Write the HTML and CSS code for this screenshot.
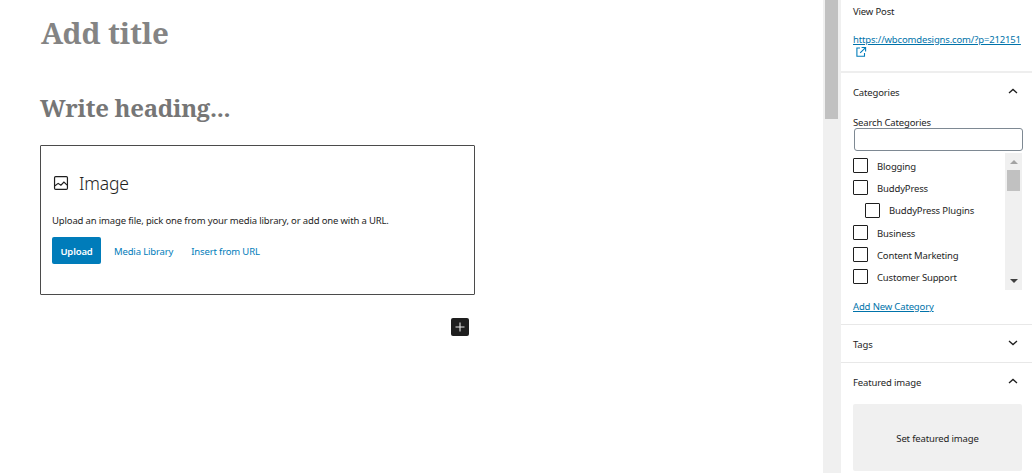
FILE: index.html
```html
<!DOCTYPE html>
<html lang="en">
<head>
  <meta charset="UTF-8">
  <title>Add New Post</title>
  <link rel="stylesheet" href="styles.css">
</head>
<body>
  <div class="editor">
    <main class="canvas">
      <h1 class="post-title">Add title</h1>
      <h2 class="heading-block">Write heading...</h2>

      <div class="placeholder">
        <div class="placeholder-label">
          <svg width="18" height="18" viewBox="0 0 24 24" fill="none" stroke="#1e1e1e" stroke-width="1.6">
            <rect x="3.4" y="3.4" width="17.2" height="17.2" rx="1.5"/>
            <path d="M4 15.6l4.2-3.1 3.7 2.5 4-4.2 4.3 4"/>
          </svg>
          <span>Image</span>
        </div>
        <p class="instructions">Upload an image file, pick one from your media library, or add one with a URL.</p>
        <div class="actions">
          <button class="upload">Upload</button>
          <button class="link library">Media Library</button>
          <button class="link">Insert from URL</button>
        </div>
      </div>

      <button class="inserter">
        <svg width="18" height="18" viewBox="0 0 18 18" stroke="#e4e4e4" stroke-width="1.1">
          <path d="M9 4.5v9M4.5 9h9"/>
        </svg>
      </button>
    </main>

    <div class="page-scroll"><div class="page-thumb"></div></div>

    <aside class="sidebar">
      <section class="permalink">
        <p class="view-post">View Post</p>
        <a href="#">https://wbcomdesigns.com/?p=212151</a>
        <svg width="12" height="12" viewBox="0 0 12 12" fill="none" stroke="#007cba" stroke-width="1.1">
          <path d="M5 2H1.9v8.2h7.6V7M6.6 1.5h4v4M10.3 1.8L5.2 6.9"/>
        </svg>
      </section>

      <section class="panel categories">
        <div class="panel-title">
          <span>Categories</span>
          <svg width="10" height="6" viewBox="0 0 10 6" fill="none" stroke="#1e1e1e" stroke-width="1.3"><path d="M1 5l4-3.6L9 5"/></svg>
        </div>
        <label class="search-label" for="search">Search Categories</label>
        <input class="search" id="search" type="text">
        <div class="category-box">
          <div class="category-list">
            <label><input type="checkbox"><span>Blogging</span></label>
            <label><input type="checkbox"><span>BuddyPress</span></label>
            <label class="child"><input type="checkbox"><span>BuddyPress Plugins</span></label>
            <label><input type="checkbox"><span>Business</span></label>
            <label><input type="checkbox"><span>Content Marketing</span></label>
            <label><input type="checkbox"><span>Customer Support</span></label>
          </div>
          <div class="list-scroll">
            <svg width="8" height="4" viewBox="0 0 8 4" fill="#a3a3a3"><path d="M0 4l4-4 4 4z"/></svg>
            <div class="list-thumb"></div>
            <svg class="down" width="8" height="4" viewBox="0 0 8 4" fill="#404040"><path d="M0 0l4 4 4-4z"/></svg>
          </div>
        </div>
        <a class="add-new" href="#">Add New Category</a>
      </section>

      <section class="panel tags">
        <div class="panel-title">
          <span>Tags</span>
          <svg width="10" height="6" viewBox="0 0 10 6" fill="none" stroke="#1e1e1e" stroke-width="1.3"><path d="M1 1l4 3.6L9 1"/></svg>
        </div>
      </section>

      <section class="panel featured">
        <div class="panel-title">
          <span>Featured image</span>
          <svg width="10" height="6" viewBox="0 0 10 6" fill="none" stroke="#1e1e1e" stroke-width="1.3"><path d="M1 5l4-3.6L9 5"/></svg>
        </div>
        <button class="set-image">Set featured image</button>
      </section>
    </aside>
  </div>
</body>
</html>
```
FILE: styles.css
```css
* {
  box-sizing: border-box;
}
body {
  margin: 0;
  background: #fff;
  color: #1e1e1e;
  font: 9.5px/14px "Noto Sans", "Open Sans", sans-serif;
  letter-spacing: -0.15px;
  overflow: hidden;
}
h1, h2, p {
  margin: 0;
}
button {
  border: 0;
  padding: 0;
  font: inherit;
  letter-spacing: inherit;
  cursor: pointer;
}
svg {
  display: block;
}
a {
  color: #0073aa;
}
.editor {
  display: flex;
  height: 473px;
}

/* editor canvas */
.canvas {
  width: 823px;
  padding: 13px 0 0 40px;
}
.post-title, .heading-block {
  font-family: "Noto Serif", "DejaVu Serif Condensed", "DejaVu Serif", serif;
  font-weight: bold;
}
.post-title {
  padding-left: 1px;
  color: #848484;
  font-size: 29.5px;
  line-height: 40px;
}
.heading-block {
  margin-top: 39px;
  color: #767676;
  font-size: 24px;
  line-height: 32px;
  letter-spacing: -0.3px;
}
.placeholder {
  width: 435px;
  height: 150px;
  margin-top: 21px;
  padding: 24px 11px;
  border: 1px solid #4b4b4b;
  border-radius: 1px;
}
.placeholder-label {
  display: flex;
  align-items: center;
  gap: 9px;
  height: 26px;
  font-size: 17.5px;
  font-weight: 300;
}
.instructions {
  margin-top: 18px;
}
.actions {
  display: flex;
  align-items: center;
  margin-top: 9px;
}
.upload {
  width: 49px;
  height: 27px;
  margin-right: 13px;
  padding-top: 2px;
  border-radius: 2px;
  background: #007cba;
  color: #fff;
  font-weight: 600;
}
.link {
  padding-top: 2px;
  background: none;
  color: #007cba;
}
.library {
  margin-right: 18px;
}
.inserter {
  display: block;
  width: 18px;
  height: 18px;
  margin: 23px 0 0 411px;
  border-radius: 2px;
  background: #1e1e1e;
}

/* page scrollbar */
.page-scroll {
  width: 18px;
  padding-left: 2px;
  background: #f0f0f0;
}
.page-thumb {
  width: 13px;
  height: 119px;
  background: #c1c1c1;
}

/* settings sidebar */
.sidebar {
  width: 191px;
}
.permalink {
  height: 73px;
  padding: 5px 0 0 12px;
  border-bottom: 2px solid #eee;
}
.view-post {
  margin-bottom: 14px;
}
.permalink a {
  display: block;
  height: 13px;
}
.permalink svg {
  margin-left: 2px;
}
.panel {
  padding: 0 9px 0 12px;
  border-bottom: 1px solid #e8e8e8;
}
.panel-title {
  display: flex;
  align-items: center;
  justify-content: space-between;
  height: 38px;
  padding-right: 5px;
}
.panel-title span {
  padding-top: 2px;
}
.panel-title svg {
  margin-bottom: 2px;
}
.categories {
  height: 252px;
}
.search-label {
  display: block;
  margin-top: 5px;
  height: 12px;
}
.search {
  display: block;
  width: 169px;
  height: 23px;
  margin-left: 1px;
  border: 1px solid #7e8993;
  border-radius: 3px;
}
.category-box {
  display: flex;
  justify-content: space-between;
  height: 137px;
  margin-top: 2px;
  padding-right: 1px;
}
.category-list {
  padding-top: 5px;
}
.category-list label {
  display: flex;
  align-items: center;
  gap: 9px;
  height: 15px;
  margin-bottom: 7px;
}
.category-list .child {
  margin: 8px 0 7px 12px;
}
.category-list input {
  appearance: none;
  width: 15px;
  height: 15px;
  margin: 0;
  border: 1px solid #1e1e1e;
  border-radius: 1px;
}
.category-list span {
  padding-top: 3px;
}
.category-list .child span {
  padding-top: 1px;
}
.list-scroll {
  display: flex;
  flex-direction: column;
  align-items: center;
  width: 17px;
  padding: 7px 0;
  background: #f0f0f0;
}
.list-thumb {
  width: 13px;
  height: 21px;
  margin-top: 6px;
  background: #c1c1c1;
}
.down {
  margin-top: auto;
}
.add-new {
  display: block;
  margin-top: 10px;
}
.tags {
  height: 38px;
}
.set-image {
  display: block;
  width: 169px;
  height: 67px;
  margin-top: 3px;
  padding-top: 2px;
  border-radius: 2px;
  background: #f0f0f0;
  color: #1e1e1e;
}
.featured {
  border-bottom: 0;
}
```
